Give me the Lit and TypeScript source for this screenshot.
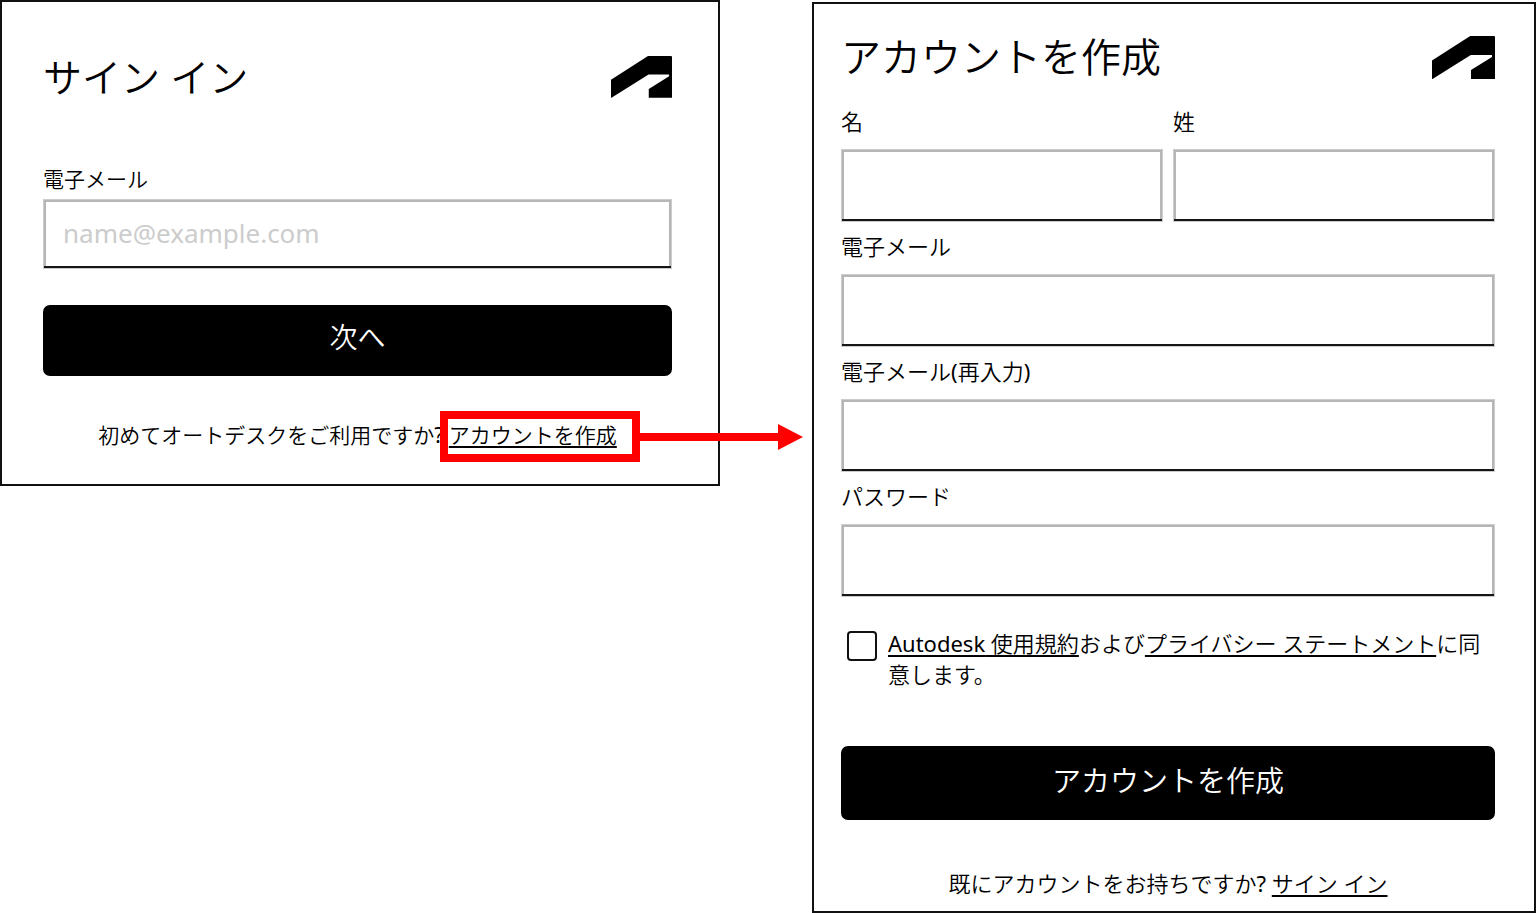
import { LitElement, html, css } from "lit";
import { customElement } from "lit/decorators.js";

const shared = css`
  * {
    box-sizing: border-box;
  }
  .logo {
    display: block;
    flex: none;
    fill: #000;
  }
  .header {
    display: flex;
    align-items: center;
    justify-content: space-between;
    height: 60px;
  }
  .title {
    margin: 0;
    font-weight: 350;
    line-height: 60px;
  }
  .field {
    display: flex;
    flex-direction: column;
    min-width: 0;
  }
  .label {
    line-height: 28px;
  }
  .latin {
    font-weight: 400;
  }
  .input {
    width: 100%;
    margin: 0;
    padding: 0 20px;
    border: 1px solid #ccc;
    border-radius: 0;
    outline: none;
    background: #fff;
    box-shadow: inset 0 -2px 0 #161616, inset 0 0 0 2px #b6b6b6;
    color: #000;
    font-family: inherit;
    font-size: 26px;
  }
  .input::placeholder {
    color: #ccc;
    opacity: 1;
  }
  .button {
    display: block;
    width: 100%;
    margin: 0;
    padding: 0 0 9px;
    border: 0;
    border-radius: 7px;
    background: #000;
    color: #fff;
    font-family: inherit;
    font-weight: inherit;
    cursor: pointer;
  }
  .footer {
    margin: 0;
    text-align: center;
    line-height: 30px;
  }
  a {
    color: inherit;
    text-decoration: underline;
    text-decoration-thickness: 2px;
    text-underline-offset: 3px;
    text-decoration-skip-ink: none;
  }
`;

const logo = (width: number) => html`
  <svg class="logo" width=${width} viewBox="0 0 63 43" role="img" aria-label="Autodesk">
    <path
      d="M0 24.5 38.2 0H62a1 1 0 0 1 1 1V43H39V34L60 21V19H38.8L.5 43H0Z"
    />
  </svg>
`;

@customElement("sign-in-card")
export class SignInCard extends LitElement {
  static styles = [
    shared,
    css`
      :host {
        display: block;
        box-sizing: border-box;
        padding: 45px 46px 34px 41px;
        border: 2px solid #111;
        font-size: 21px;
      }
      .title {
        font-size: 39px;
      }
      .field {
        gap: 6px;
        margin: 58px 0 36px;
      }
      .input {
        height: 70px;
        padding: 0 19px 3px;
      }
      .button {
        height: 71px;
        font-size: 28px;
      }
      .footer {
        margin-top: 44px;
      }
      .target {
        position: relative;
        display: inline-block;
      }
      .callout {
        position: absolute;
        top: -9px;
        bottom: -12px;
        left: -9px;
        right: -23px;
        border: 8px solid #f00;
        pointer-events: none;
      }
      .arrow {
        position: absolute;
        top: 50%;
        left: 100%;
        width: 171px;
        height: 26px;
        transform: translateY(-50%);
      }
    `,
  ];

  render() {
    return html`
      <header class="header">
        <h1 class="title">サイン イン</h1>
        ${logo(61)}
      </header>
      <div class="field">
        <label class="label" for="email">電子メール</label>
        <input class="input" id="email" type="email" placeholder="name@example.com" />
      </div>
      <button class="button" type="button">次へ</button>
      <p class="footer">
        初めてオートデスクをご利用ですか<span class="latin">?</span>
        <span class="target"
          ><a href="#create">アカウントを作成</a
          ><span class="callout" aria-hidden="true"
            ><svg class="arrow" viewBox="0 0 171 26">
              <path fill="#f00" d="M0 9H146V0L171 13 146 26V17H0Z" /></svg></span
        ></span>
      </p>
    `;
  }
}

@customElement("create-account-card")
export class CreateAccountCard extends LitElement {
  static styles = [
    shared,
    css`
      :host {
        display: block;
        box-sizing: border-box;
        padding: 23px 39px 13px 27px;
        border: 2px solid #111;
        font-size: 22px;
      }
      .title {
        font-size: 40px;
      }
      .fields {
        display: grid;
        grid-template-columns: 1fr 1fr;
        gap: 10px;
        margin-top: 20px;
      }
      .field {
        gap: 14px;
      }
      .wide {
        grid-column: 1 / -1;
      }
      .input {
        height: 73px;
      }
      .terms {
        display: flex;
        align-items: flex-start;
        gap: 11px;
        margin: 31px 0 56px;
        padding-left: 6px;
        line-height: 31px;
      }
      .check {
        appearance: none;
        flex: none;
        width: 30px;
        height: 30px;
        margin: 3px 0 0;
        border: 2px solid #111;
        border-radius: 4px;
        background: #fff;
      }
      .button {
        height: 74px;
        font-size: 29px;
      }
      .footer {
        margin-top: 48px;
      }
    `,
  ];

  render() {
    return html`
      <header class="header">
        <h1 class="title">アカウントを作成</h1>
        ${logo(63)}
      </header>
      <div class="fields">
        <div class="field">
          <label class="label" for="first">名</label>
          <input class="input" id="first" type="text" />
        </div>
        <div class="field">
          <label class="label" for="last">姓</label>
          <input class="input" id="last" type="text" />
        </div>
        <div class="field wide">
          <label class="label" for="email">電子メール</label>
          <input class="input" id="email" type="email" />
        </div>
        <div class="field wide">
          <label class="label" for="confirm"
            >電子メール<span class="latin">(</span>再入力<span class="latin">)</span></label
          >
          <input class="input" id="confirm" type="email" />
        </div>
        <div class="field wide">
          <label class="label" for="password">パスワード</label>
          <input class="input" id="password" type="password" />
        </div>
      </div>
      <div class="terms">
        <input class="check" id="agree" type="checkbox" />
        <label for="agree"
          ><a href="#terms"><span class="latin">Autodesk</span> 使用規約</a>および<a href="#privacy"
            >プライバシー ステートメント</a
          >に同意します。</label
        >
      </div>
      <button class="button" type="button">アカウントを作成</button>
      <p class="footer">
        既にアカウントをお持ちですか<span class="latin">?</span> <a href="#signin">サイン イン</a>
      </p>
    `;
  }
}

@customElement("app-root")
export class AppRoot extends LitElement {
  static styles = css`
    :host {
      display: block;
      background: #fff;
      color: #000;
      font-family: "Noto Sans", "Noto Sans CJK JP", sans-serif;
      font-weight: 350;
    }
    .flow {
      display: grid;
      grid-template-columns: 720fr 724fr;
      column-gap: 92px;
      align-items: start;
    }
    .signin {
      position: relative;
      z-index: 1;
    }
    .create {
      margin-top: 2px;
    }
  `;

  render() {
    return html`
      <main class="flow" lang="ja">
        <sign-in-card class="signin"></sign-in-card>
        <create-account-card class="create"></create-account-card>
      </main>
    `;
  }
}
